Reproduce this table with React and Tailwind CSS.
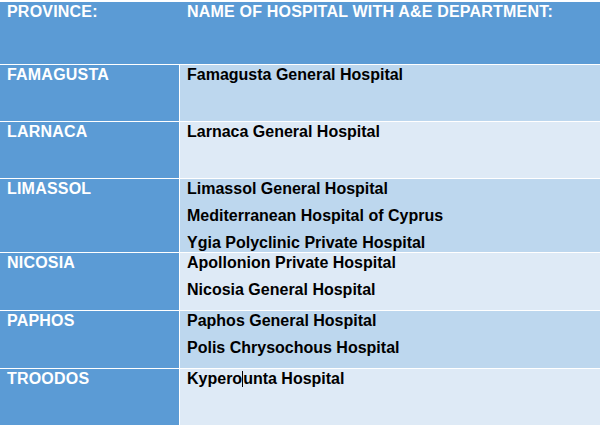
const rows = [
  { province: "FAMAGUSTA", h: "h-[56px]", shade: "bg-[#bdd7ee]", hospitals: ["Famagusta General Hospital"] },
  { province: "LARNACA", h: "h-[56px]", shade: "bg-[#deeaf6]", hospitals: ["Larnaca General Hospital"] },
  {
    province: "LIMASSOL",
    h: "h-[73px]",
    shade: "bg-[#bdd7ee]",
    hospitals: ["Limassol General Hospital", "Mediterranean Hospital of Cyprus", "Ygia Polyclinic Private Hospital"],
  },
  { province: "NICOSIA", h: "h-[57px]", shade: "bg-[#deeaf6]", hospitals: ["Apollonion Private Hospital", "Nicosia General Hospital"] },
  { province: "PAPHOS", h: "h-[57px]", shade: "bg-[#bdd7ee]", hospitals: ["Paphos General Hospital", "Polis Chrysochous Hospital"] },
];

export default function App() {
  return (
    <div className="w-[600px] h-[425px] overflow-hidden bg-white pt-[2px] flex flex-col gap-px font-['Liberation_Sans',Arial,sans-serif] font-bold text-[16px] leading-[18px]">
      <div className="h-[62px] shrink-0 flex bg-[#5b9bd5] text-white tracking-[0.2px]">
        <div className="w-[180px] shrink-0 pl-[7px] pt-[1px]">PROVINCE:</div>
        <div className="flex-1 pl-[7px] pt-[1px]">NAME OF HOSPITAL WITH A&amp;E DEPARTMENT:</div>
      </div>
      {rows.map((r) => (
        <div key={r.province} className={`${r.h} shrink-0 flex gap-px`}>
          <div className="w-[179px] shrink-0 bg-[#5b9bd5] text-white tracking-[0.2px] pl-[7px] pt-[1px]">{r.province}</div>
          <div className={`flex-1 ${r.shade} text-black pl-[7px] pt-[1px] flex flex-col gap-[9px]`}>
            {r.hospitals.map((h) => (
              <p key={h}>{h}</p>
            ))}
          </div>
        </div>
      ))}
      <div className="flex-1 flex gap-px">
        <div className="w-[179px] shrink-0 bg-[#5b9bd5] text-white tracking-[0.2px] pl-[7px] pt-[1px]">TROODOS</div>
        <div className="flex-1 bg-[#deeaf6] text-black pl-[7px] pt-[1px]">
          <p>
            Kypero
            <span className="inline-block w-px h-[16px] bg-black align-[-3px]" />
            unta Hospital
          </p>
        </div>
      </div>
    </div>
  );
}
